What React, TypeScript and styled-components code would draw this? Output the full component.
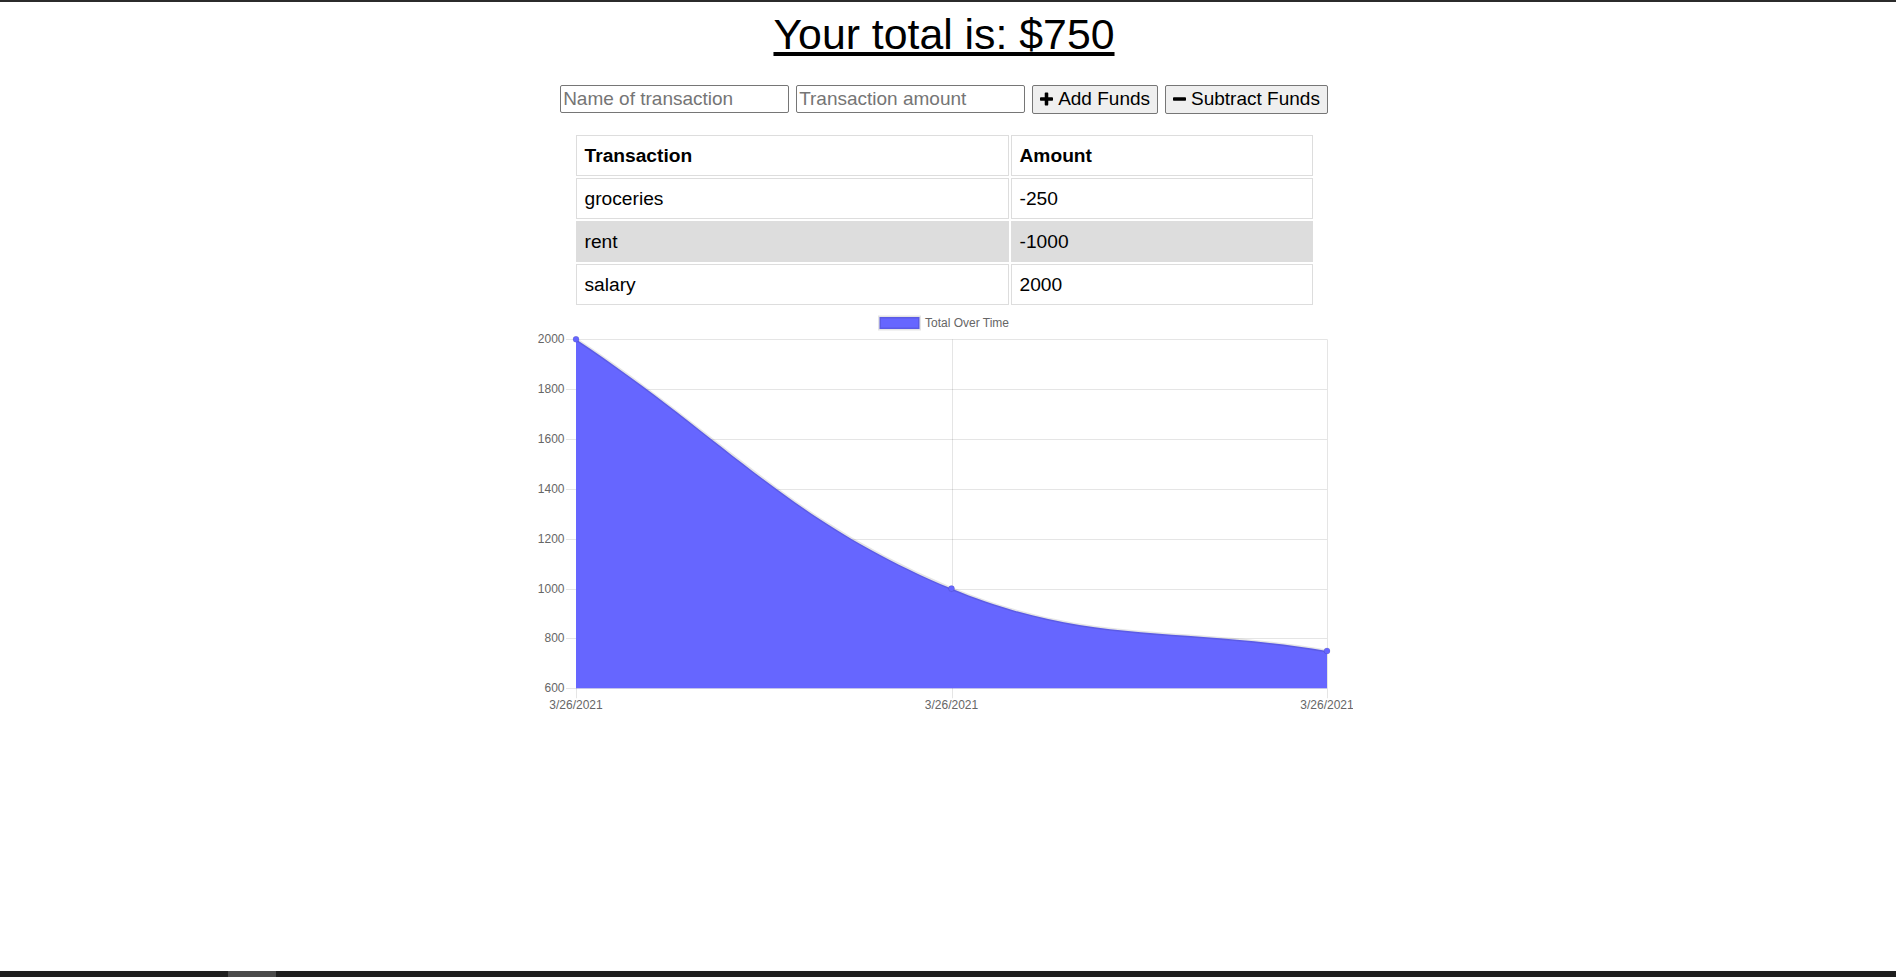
import React from "react";
import styled, { createGlobalStyle } from "styled-components";

const GlobalStyle = createGlobalStyle`
  html, body { margin: 0; padding: 0; background: #ffffff; }
  body { font-family: "Liberation Sans", Arial, Helvetica, sans-serif; color: #000; }
  * { box-sizing: border-box; }
`;

const Frame = styled.div`
  min-height: 100vh;
  display: flex;
  flex-direction: column;
`;

const TopBar = styled.div`
  height: 2px;
  background: #2b2b2b;
  flex: 0 0 auto;
`;

const Main = styled.main`
  flex: 1 1 auto;
  width: 1888px;
  display: flex;
  flex-direction: column;
  align-items: center;
`;

const Title = styled.h1`
  margin: 6.8px 0 0;
  font-size: 42.8px;
  line-height: 50px;
  font-weight: 400;
  text-decoration: underline;
  text-align: center;
`;

const Form = styled.div`
  margin-top: 26.2px;
  display: flex;
  align-items: center;
  gap: 7px;
  height: 29px;
`;

const Input = styled.input`
  width: 229px;
  height: 28px;
  padding: 0 2px;
  border: 1px solid #767676;
  border-radius: 2px;
  font-family: "Liberation Sans", Arial, sans-serif;
  font-size: 19px;
  color: #000;
  background: #fff;
  &::placeholder { color: #757575; }
`;

const Button = styled.button`
  height: 29px;
  padding: 0 7px;
  display: flex;
  align-items: center;
  gap: 5px;
  border: 1px solid #767676;
  border-radius: 2px;
  background: #efefef;
  font-family: "Liberation Sans", Arial, sans-serif;
  font-size: 19px;
  color: #000;
`;

const Icon = styled.svg`
  width: 13px;
  height: 14px;
  flex: 0 0 auto;
  fill: #000;
`;

const Table = styled.table`
  margin-top: 19px;
  width: 741px;
  table-layout: fixed;
  border-collapse: separate;
  border-spacing: 2px;
  font-size: 19.2px;
`;

const Cell = styled.td<{ $head?: boolean; $shade?: boolean; $w?: number }>`
  ${(p) => (p.$w ? `width: ${p.$w}px;` : "")}
  height: 41px;
  padding: 8px;
  line-height: 23px;
  border: 1px solid #dddddd;
  text-align: left;
  font-weight: ${(p) => (p.$head ? 700 : 400)};
  background: ${(p) => (p.$shade ? "#dddddd" : "#ffffff")};
`;

const ChartBox = styled.div`
  width: 817px;
  height: 408px;
  svg { display: block; }
`;

const BottomBar = styled.div`
  height: 6px;
  background: #1f1f1f;
  flex: 0 0 auto;
  display: flex;
  padding-left: 228px;
`;

const Thumb = styled.div`
  width: 48px;
  height: 100%;
  background: #4b4b4b;
`;

const PlusIcon = () => (
  <Icon viewBox="0 0 1408 1408">
    <path d="M1408 608v192q0 40-28 68t-68 28h-416v416q0 40-28 68t-68 28h-192q-40 0-68-28t-28-68v-416h-416q-40 0-68-28t-28-68v-192q0-40 28-68t68-28h416v-416q0-40 28-68t68-28h192q40 0 68 28t28 68v416h416q40 0 68 28t28 68z" />
  </Icon>
);

const MinusIcon = () => (
  <Icon viewBox="0 0 1408 1408">
    <path d="M1408 608v192q0 40-28 68t-68 28h-1216q-40 0-68-28t-28-68v-192q0-40 28-68t68-28h1216q40 0 68 28t28 68z" />
  </Icon>
);

const rows = [
  { name: "groceries", amount: "-250" },
  { name: "rent", amount: "-1000" },
  { name: "salary", amount: "2000" },
];

const X0 = 576;
const X2 = 1327;
const TOP = 339.3;
const BOT = 688.3;
const yOf = (v: number) => BOT - ((v - 600) / 1400) * (BOT - TOP);
const pts = [
  { x: X0, y: yOf(2000) },
  { x: (X0 + X2) / 2, y: yOf(1000) },
  { x: X2, y: yOf(750) },
];

type P = { x: number; y: number };
function spline(p0: P, p1: P, p2: P, t: number) {
  const d01 = Math.hypot(p1.x - p0.x, p1.y - p0.y);
  const d12 = Math.hypot(p2.x - p1.x, p2.y - p1.y);
  let s01 = d01 / (d01 + d12);
  let s12 = d12 / (d01 + d12);
  s01 = isNaN(s01) ? 0 : s01;
  s12 = isNaN(s12) ? 0 : s12;
  const fa = t * s01;
  const fb = t * s12;
  return {
    prev: { x: p1.x - fa * (p2.x - p0.x), y: p1.y - fa * (p2.y - p0.y) },
    next: { x: p1.x + fb * (p2.x - p0.x), y: p1.y + fb * (p2.y - p0.y) },
  };
}

const cps = pts.map((p, i) =>
  spline(pts[Math.max(0, i - 1)], p, pts[Math.min(pts.length - 1, i + 1)], 0.4)
);
const f = (n: number) => n.toFixed(2);
let curve = `M${f(pts[0].x)},${f(pts[0].y)}`;
for (let i = 1; i < pts.length; i++) {
  const a = cps[i - 1].next;
  const b = cps[i].prev;
  curve += ` C${f(a.x)},${f(a.y)} ${f(b.x)},${f(b.y)} ${f(pts[i].x)},${f(pts[i].y)}`;
}
const area = `${curve} L${X2},${BOT} L${X0},${BOT} Z`;

const yTicks = [2000, 1800, 1600, 1400, 1200, 1000, 800, 600];
const xTicks = [X0, (X0 + X2) / 2, X2];
const grid = "rgba(0,0,0,0.1)";
const crisp = (n: number) => Math.round(n) + 0.5;

function Chart() {
  return (
    <ChartBox>
      <svg width="817" height="408" viewBox="536 307 817 408" fontFamily='"Liberation Sans", Arial, sans-serif' fontSize="12" fill="#666">
        <rect x="879.5" y="317" width="40" height="12" fill="#6666ff" stroke={grid} strokeWidth="3" />
        <text x="925" y="326.5" fill="#666">Total Over Time</text>
        {yTicks.map((v) => (
          <g key={v}>
            <line x1={566} x2={X2} y1={crisp(yOf(v))} y2={crisp(yOf(v))} stroke={grid} strokeWidth="1" />
            <text x={564.5} y={yOf(v) + 4} textAnchor="end" fill="#666">{v}</text>
          </g>
        ))}
        {xTicks.map((x, i) => (
          <g key={i}>
            <line x1={crisp(x)} x2={crisp(x)} y1={TOP} y2={BOT + 10} stroke={grid} strokeWidth="1" />
            <text x={x} y={709} textAnchor="middle" fill="#666">3/26/2021</text>
          </g>
        ))}
        <path d={area} fill="#6666ff" stroke="none" />
        <path d={curve} fill="none" stroke={grid} strokeWidth="3" />
        {pts.map((p, i) => (
          <circle key={i} cx={p.x} cy={p.y} r="3" fill="#6666ff" stroke={grid} strokeWidth="1" />
        ))}
      </svg>
    </ChartBox>
  );
}

export default function App() {
  return (
    <Frame>
      <GlobalStyle />
      <TopBar />
      <Main>
        <Title>Your total is: $750</Title>
        <Form>
          <Input type="text" placeholder="Name of transaction" />
          <Input type="number" placeholder="Transaction amount" />
          <Button>
            <PlusIcon />
            Add Funds
          </Button>
          <Button>
            <MinusIcon />
            Subtract Funds
          </Button>
        </Form>
        <Table>
          <thead>
            <tr>
              <Cell as="th" $head $w={433}>Transaction</Cell>
              <Cell as="th" $head>Amount</Cell>
            </tr>
          </thead>
          <tbody>
            {rows.map((r, i) => (
              <tr key={r.name}>
                <Cell $shade={i === 1}>{r.name}</Cell>
                <Cell $shade={i === 1}>{r.amount}</Cell>
              </tr>
            ))}
          </tbody>
        </Table>
        <Chart />
      </Main>
      <BottomBar>
        <Thumb />
      </BottomBar>
    </Frame>
  );
}
